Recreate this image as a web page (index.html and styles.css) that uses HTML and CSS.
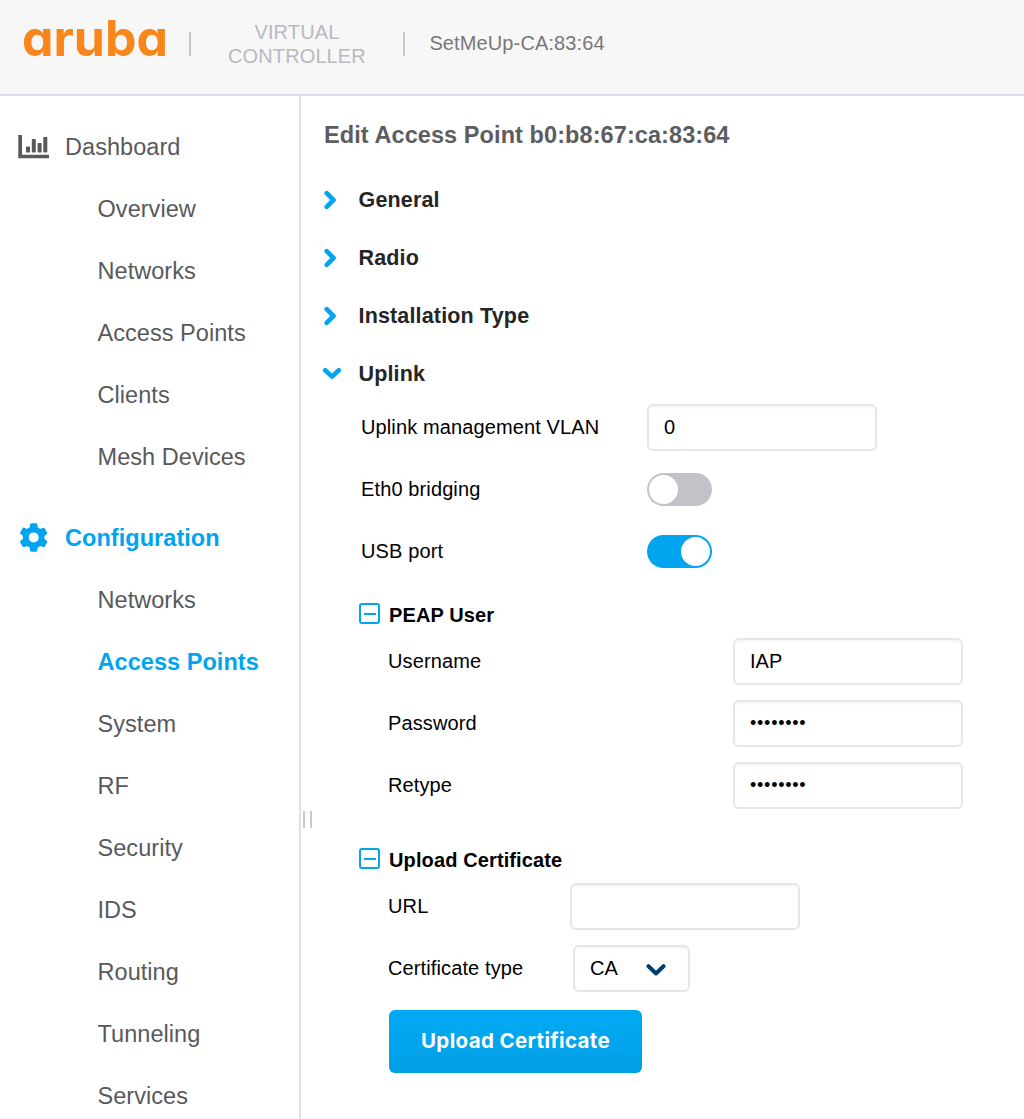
FILE: index.html
```html
<!DOCTYPE html>
<html lang="en">
<head>
<meta charset="utf-8">
<title>Aruba Virtual Controller</title>
<link rel="stylesheet" href="styles.css">
</head>
<body>
<header class="topbar">
  <svg class="logo" width="146" height="42" viewBox="0 0 146 42" role="img" aria-label="aruba"><text class="logo-text" x="0" y="35.500" textLength="146" lengthAdjust="spacingAndGlyphs">aruba</text></svg>
  <span class="divider"></span>
  <span class="product">VIRTUAL<br>CONTROLLER</span>
  <span class="divider"></span>
  <span class="device">SetMeUp-CA:83:64</span>
</header>
<div class="layout">
  <nav class="sidebar">
    <a class="nav-group">
      <svg class="nav-icon" width="32" height="24" viewBox="0 0 32 24" fill="#58595d"><path d="M.3 0h3.700v19.700H31v3.500H.3z"/><rect x="8" y="11.500" width="4" height="6" rx=".7"/><rect x="13.800" y="4" width="4" height="13.500" rx=".7"/><rect x="19.600" y="8" width="4" height="9.500" rx=".7"/><rect x="25.300" y="2" width="4" height="15.500" rx=".7"/></svg>
      <span>Dashboard</span>
    </a>
    <a class="nav-item">Overview</a>
    <a class="nav-item">Networks</a>
    <a class="nav-item">Access Points</a>
    <a class="nav-item">Clients</a>
    <a class="nav-item">Mesh Devices</a>
    <a class="nav-group nav-group-open active">
      <svg class="nav-icon" width="32" height="32" viewBox="0 0 32 32"><path fill="#01a4ee" fill-rule="evenodd" d="M12.1 2.4Q12.3 1.2 13.4 1.2h4.6q1.1 0 1.3 1.2l.4 2.9 2.7 1.6 2.7-1.1q1.1-.4 1.7.6l2.3 4q.5 1-.3 1.7l-2.3 1.8v3.1l2.3 1.8q.8.7.3 1.7l-2.3 4q-.6 1-1.7.6l-2.7-1.1-2.7 1.6-.4 2.9q-.2 1.2-1.3 1.2h-4.6q-1.1 0-1.3-1.2l-.4-2.9L9 23.9 6.300 25q-1.100.4-1.700-.6l-2.300-4q-.5-1 .3-1.700l2.300-1.800v-3.100l-2.300-1.800q-.8-.7-.3-1.700l2.300-4q.6-1 1.700-.6L9 6.900l2.700-1.600zM15.700 10.400a5 5 0 1 0 0 10 5 5 0 1 0 0-10z"/></svg>
      <span>Configuration</span>
    </a>
    <a class="nav-item">Networks</a>
    <a class="nav-item active">Access Points</a>
    <a class="nav-item">System</a>
    <a class="nav-item">RF</a>
    <a class="nav-item">Security</a>
    <a class="nav-item">IDS</a>
    <a class="nav-item">Routing</a>
    <a class="nav-item">Tunneling</a>
    <a class="nav-item">Services</a>
  </nav>
  <div class="resizer"><span class="grip"></span></div>
  <main class="content">
    <h1 class="title">Edit Access Point b0:b8:67:ca:83:64</h1>
    <h2 class="section"><svg class="chevron" width="20" height="20" viewBox="0 0 20 20"><path d="M4.700 3.200 11.500 10 4.700 16.800"/></svg>General</h2>
    <h2 class="section"><svg class="chevron" width="20" height="20" viewBox="0 0 20 20"><path d="M4.700 3.200 11.500 10 4.700 16.800"/></svg>Radio</h2>
    <h2 class="section"><svg class="chevron" width="20" height="20" viewBox="0 0 20 20"><path d="M4.700 3.200 11.500 10 4.700 16.800"/></svg>Installation Type</h2>
    <h2 class="section"><svg class="chevron" width="20" height="20" viewBox="0 0 20 20"><path d="M3.200 6.300 10 12.600 16.800 6.300"/></svg>Uplink</h2>
    <div class="fields uplink">
      <label class="field"><span class="label">Uplink management VLAN</span><input class="input" type="text" value="0"></label>
      <div class="field"><span class="label">Eth0 bridging</span><span class="toggle"><span class="knob"></span></span></div>
      <div class="field"><span class="label">USB port</span><span class="toggle on"><span class="knob"></span></span></div>
    </div>
    <h3 class="group peap-title"><span class="collapse"></span>PEAP User</h3>
    <div class="fields peap">
      <label class="field"><span class="label">Username</span><input class="input" type="text" value="IAP"></label>
      <label class="field"><span class="label">Password</span><input class="input password" type="password" value="password"></label>
      <label class="field"><span class="label">Retype</span><input class="input password" type="password" value="password"></label>
    </div>
    <h3 class="group cert-title"><span class="collapse"></span>Upload Certificate</h3>
    <div class="fields cert">
      <label class="field"><span class="label">URL</span><input class="input" type="text" value=""></label>
      <div class="field"><span class="label">Certificate type</span><span class="input select">CA<svg class="select-arrow" width="20" height="14" viewBox="0 0 20 14"><path d="M2.500 3.200 10 10.500 17.500 3.200"/></svg></span></div>
    </div>
    <button class="upload" type="button">Upload Certificate</button>
  </main>
</div>
</body>
</html>
```
FILE: styles.css
```css
* { box-sizing: border-box; }
html, body { height: 1119px; overflow: hidden; }
body {
  margin: 0;
  background: #fff;
  color: #000;
  font-family: "Liberation Sans", Arial, sans-serif;
  font-size: 20px;
  letter-spacing: .12px;
}
.topbar {
  display: flex;
  align-items: center;
  height: 96px;
  padding: 0 0 7px 22px;
  background: #f7f7f7;
  border-bottom: 2px solid #dadde3;
}
.logo { margin-top: -6px; overflow: visible; }
.logo-text {
  font: 700 49px Inter, sans-serif;
  font-feature-settings: "cv11";
  letter-spacing: 0;
  fill: #f8861b;
}
.divider { width: 2px; height: 24px; background: #c6c6cb; margin-left: 21px; }
.product {
  margin: 0 37.5px 0 37px;
  line-height: 24px;
  text-align: center;
  color: #b9b9c0;
}
.product + .divider { margin-left: 0; }
.device { margin-left: 24px; color: #77777a; }
.layout { display: flex; height: 1023px; overflow: hidden; }
.sidebar { width: 299px; padding-top: 20px; flex: none; }
.nav-group, .nav-item {
  display: flex;
  align-items: center;
  height: 62.1px;
  color: #58595d;
  font-size: 23.5px;
  letter-spacing: .05px;
}
.nav-item { padding-left: 97.5px; }
.nav-group { padding-left: 18px; }
.nav-icon { margin-right: 15px; flex: none; }
.nav-group-open { margin-top: 18.5px; }
.active { color: #01a4ee; font-weight: bold; }
.resizer {
  display: flex;
  align-items: center;
  width: 14px;
  padding: 424px 0 0 2px;
  border-left: 2px solid #e0e0e6;
}
.grip { width: 9px; height: 17px; border: solid #cacace; border-width: 0 2px; }
.content { flex: 1; padding: 3px 0 0 11px; }
h1, h2, h3 { margin: 0; font-weight: bold; }
.title {
  display: flex;
  align-items: center;
  height: 72px;
  color: #5c5d61;
  font-size: 23.5px;
  letter-spacing: .08px;
}
.section {
  display: flex;
  align-items: center;
  height: 57.8px;
  padding-top: 1.6px;
  color: #252527;
  font-size: 21.5px;
  letter-spacing: .16px;
}
.chevron { margin: -1px 16.5px 0 -2px; fill: none; stroke: #01a4ee; stroke-width: 4.6; stroke-linecap: round; stroke-linejoin: round; }
.fields { display: flex; flex-direction: column; gap: 12px; }
.field { display: flex; align-items: center; height: 50px; }
.uplink { padding-left: 37px; }
.uplink .label { width: 286px; }
.peap, .cert { padding-left: 64px; }
.peap .label { width: 345px; }
.cert .label { width: 182px; }
.label { flex: none; }
.input {
  width: 230px;
  height: 47px;
  padding: 0 15px;
  border: 2px solid #e6e6e6;
  border-radius: 6px;
  background: #fff;
  box-shadow: inset 0 2px 2px #f6f6f6;
  color: #000;
  font: inherit;
  outline: none;
}
.password { font-size: 18px; letter-spacing: .75px; }
.select { display: flex; align-items: center; width: 117px; margin-left: 3px; padding: 0 15px; }
.select-arrow { margin: 4px 0 0 28px; fill: none; stroke: #013e6e; stroke-width: 4; stroke-linecap: round; stroke-linejoin: round; }
.toggle { display: flex; align-items: center; width: 65px; height: 33px; padding: 0 2px; border-radius: 17px; background: #c2c3c9; }
.knob { width: 29px; height: 29px; border-radius: 50%; background: #fff; }
.on { justify-content: flex-end; background: #01a4ee; }
.group { display: flex; align-items: center; height: 42px; padding-left: 35px; font-size: 20px; }
.peap-title { margin-top: 18px; }
.cert-title { margin-top: 29px; }
.collapse {
  display: flex;
  align-items: center;
  justify-content: center;
  width: 21px;
  height: 21px;
  margin: -3px 9px 0 0;
  border: 2px solid #01a4ee;
  border-radius: 3px;
}
.collapse::before { content: ""; width: 12px; height: 2px; background: #01a4ee; }
.upload {
  display: block;
  width: 253px;
  height: 63px;
  margin: 17px 0 0 65px;
  padding: 0 0 2px;
  border: 0;
  border-radius: 6px;
  background: linear-gradient(#02aaf3, #019fe6);
  color: #fff;
  font: 650 20.5px Inter, sans-serif;
  letter-spacing: .35px;
}
```
